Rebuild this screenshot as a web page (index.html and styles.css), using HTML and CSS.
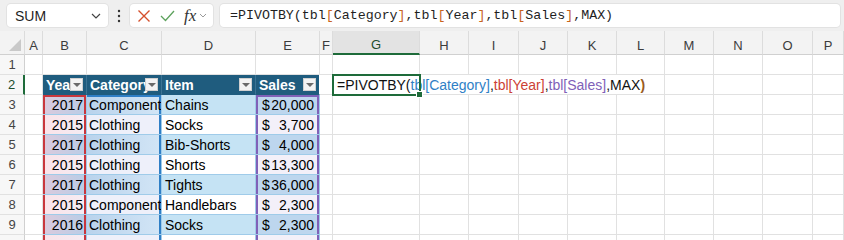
FILE: index.html
```html
<!DOCTYPE html>
<html lang="en">
<head>
    <meta charset="UTF-8">
    <title>PIVOTBY sheet</title>
    <link rel="stylesheet" href="styles.css">
</head>
<body>

    <!-- Formula bar -->
    <div class="topbar">
        <div class="namebox">
            <span>SUM</span>
            <svg width="10" height="6" viewBox="0 0 10 6"><polyline points="1,1 5,5 9,1" fill="none" stroke="#444" stroke-width="1.2"/></svg>
        </div>
        <div class="kebab">
            <svg width="4" height="14" viewBox="0 0 4 14"><circle cx="2" cy="2" r="1.2" fill="#333"/><circle cx="2" cy="7" r="1.2" fill="#333"/><circle cx="2" cy="12" r="1.2" fill="#333"/></svg>
        </div>
        <div class="fnbox">
            <svg class="cancel" width="14" height="14" viewBox="0 0 14 14"><path d="M1.5 1.5 L12.5 12.5 M12.5 1.5 L1.5 12.5" stroke="#d5502c" stroke-width="1.4" fill="none"/></svg>
            <svg class="enter" width="15" height="12" viewBox="0 0 15 12"><polyline points="1,6 5.5,10.5 14,1" fill="none" stroke="#5da25d" stroke-width="1.3"/></svg>
            <span class="fx">fx</span>
            <svg width="8" height="5" viewBox="0 0 8 5"><polyline points="1,1 4,4 7,1" fill="none" stroke="#9a9a9a" stroke-width="1"/></svg>
        </div>
        <div class="formula">=PIVOTBY(tbl<b>[</b>Category<b>]</b>,tbl<b>[</b>Year<b>]</b>,tbl<b>[</b>Sales<b>]</b>,MAX)</div>
    </div>

    <!-- Grid -->
    <table class="sheet">
        <colgroup>
            <col style="width:25px"><col style="width:18px"><col style="width:44px"><col style="width:75px">
            <col style="width:94px"><col style="width:64px"><col style="width:13px"><col style="width:87px">
            <col style="width:49px"><col style="width:50px"><col style="width:49px"><col style="width:49px">
            <col style="width:48px"><col style="width:49px"><col style="width:49px"><col style="width:50px">
            <col style="width:31px">
        </colgroup>
        <thead>
            <tr>
                <th class="corner"><span class="tri"></span></th>
                <th>A</th><th>B</th><th>C</th><th>D</th><th>E</th><th>F</th>
                <th class="sel">G</th><th>H</th><th>I</th><th>J</th><th>K</th><th>L</th>
                <th>M</th><th>N</th><th>O</th><th>P</th>
            </tr>
        </thead>
        <tbody>
            <tr>
                <td class="rh">1</td>
                <td></td><td></td><td></td><td></td><td></td><td></td><td></td>
                <td></td><td></td><td></td><td></td><td></td><td></td><td></td><td></td><td></td>
            </tr>
            <tr>
                <td class="rh cur">2</td>
                <td></td>
                <td class="hd"><div class="hd-in"><span>Year</span><i class="filter"></i></div></td>
                <td class="hd"><div class="hd-in"><span>Category</span><i class="filter"></i></div></td>
                <td class="hd"><div class="hd-in"><span>Item</span><i class="filter"></i></div></td>
                <td class="hd last"><div class="hd-in"><span>Sales</span><i class="filter"></i></div></td>
                <td></td>
                <td class="editing" colspan="6">
                    <span class="edit">=PIVOTBY(<span class="r-cat">tbl[Category]</span>,<span class="r-yr">tbl[Year]</span>,<span class="r-sales">tbl[Sales]</span>,MAX<span class="paren">)</span></span>
                    <div class="active"><i class="handle"></i></div>
                </td>
                <td></td><td></td><td></td><td></td>
            </tr>
            <tr class="band first">
                <td class="rh">3</td><td></td>
                <td class="yr">2017</td><td class="cat">Component</td><td class="item">Chains</td>
                <td class="amt"><div class="money"><span>$</span><span>20,000</span></div></td>
                <td></td><td></td><td></td><td></td><td></td><td></td><td></td><td></td><td></td><td></td><td></td>
            </tr>
            <tr>
                <td class="rh">4</td><td></td>
                <td class="yr">2015</td><td class="cat">Clothing</td><td class="item">Socks</td>
                <td class="amt"><div class="money"><span>$</span><span>3,700</span></div></td>
                <td></td><td></td><td></td><td></td><td></td><td></td><td></td><td></td><td></td><td></td><td></td>
            </tr>
            <tr class="band">
                <td class="rh">5</td><td></td>
                <td class="yr">2017</td><td class="cat">Clothing</td><td class="item">Bib-Shorts</td>
                <td class="amt"><div class="money"><span>$</span><span>4,000</span></div></td>
                <td></td><td></td><td></td><td></td><td></td><td></td><td></td><td></td><td></td><td></td><td></td>
            </tr>
            <tr>
                <td class="rh">6</td><td></td>
                <td class="yr">2015</td><td class="cat">Clothing</td><td class="item">Shorts</td>
                <td class="amt"><div class="money"><span>$</span><span>13,300</span></div></td>
                <td></td><td></td><td></td><td></td><td></td><td></td><td></td><td></td><td></td><td></td><td></td>
            </tr>
            <tr class="band">
                <td class="rh">7</td><td></td>
                <td class="yr">2017</td><td class="cat">Clothing</td><td class="item">Tights</td>
                <td class="amt"><div class="money"><span>$</span><span>36,000</span></div></td>
                <td></td><td></td><td></td><td></td><td></td><td></td><td></td><td></td><td></td><td></td><td></td>
            </tr>
            <tr>
                <td class="rh">8</td><td></td>
                <td class="yr">2015</td><td class="cat">Component</td><td class="item">Handlebars</td>
                <td class="amt"><div class="money"><span>$</span><span>2,300</span></div></td>
                <td></td><td></td><td></td><td></td><td></td><td></td><td></td><td></td><td></td><td></td><td></td>
            </tr>
            <tr class="band">
                <td class="rh">9</td><td></td>
                <td class="yr">2016</td><td class="cat">Clothing</td><td class="item">Socks</td>
                <td class="amt"><div class="money"><span>$</span><span>2,300</span></div></td>
                <td></td><td></td><td></td><td></td><td></td><td></td><td></td><td></td><td></td><td></td><td></td>
            </tr>
            <tr>
                <td class="rh"></td><td></td>
                <td class="yr"></td><td class="cat"></td><td class="item"></td><td class="amt"></td>
                <td></td><td></td><td></td><td></td><td></td><td></td><td></td><td></td><td></td><td></td><td></td>
            </tr>
        </tbody>
    </table>

</body>
</html>
```

FILE: styles.css
```css
body {
    margin: 0;
    width: 844px;
    height: 240px;
    overflow: hidden;
    background: #fff;
    font-family: "Liberation Sans", Arial, sans-serif;
}

/* Formula bar */
.topbar {
    display: flex;
    align-items: center;
    height: 31px;
    padding: 0 4px 0 7px;
    background: #efefef;
    box-sizing: border-box;
}

.namebox {
    display: flex;
    align-items: center;
    justify-content: space-between;
    width: 101px;
    height: 23px;
    padding: 0 7px 0 8px;
    background: #fff;
    border-radius: 4px;
    box-shadow: 0 0 0 1px #e2e2e2;
    box-sizing: border-box;
    font-size: 14px;
    color: #1f1f1f;
}

.kebab {
    display: flex;
    justify-content: center;
    width: 22px;
}

.fnbox {
    display: flex;
    align-items: center;
    width: 83px;
    height: 23px;
    padding: 0 4px 0 7px;
    margin-right: 7px;
    background: #fff;
    border-radius: 4px;
    box-shadow: 0 0 0 1px #e2e2e2;
    box-sizing: border-box;
}

.fnbox .cancel {
    margin-right: 9px;
}

.fnbox .enter {
    margin-right: 9px;
}

.fx {
    font-family: "Liberation Serif", serif;
    font-style: italic;
    font-size: 17px;
    color: #333;
    margin-right: 3px;
    line-height: 1;
}

.formula {
    flex: 1;
    height: 23px;
    line-height: 23px;
    padding-left: 10px;
    background: #fff;
    border-radius: 4px;
    box-shadow: 0 0 0 1px #e2e2e2;
    font-family: "Liberation Mono", monospace;
    font-size: 13.3px;
    color: #1f1f1f;
}

.formula b {
    font-weight: normal;
    color: #c8641e;
}

/* Sheet grid */
.sheet {
    border-collapse: separate;
    border-spacing: 0;
    table-layout: fixed;
    width: 844px;
}

.sheet th,
.sheet td {
    padding: 0;
    border-right: 1px solid #e1e1e1;
    border-bottom: 1px solid #e1e1e1;
    white-space: nowrap;
    overflow: hidden;
    font-size: 14px;
    box-sizing: border-box;
}

.sheet thead tr {
    height: 24px;
}

.sheet tbody tr {
    height: 20px;
}

.sheet th {
    background: #f3f3f3;
    font-weight: normal;
    font-size: 13px;
    color: #3c3c3c;
    padding-top: 5px;
    border-bottom-color: #d0d0d0;
    border-right-color: #dcdcdc;
}

.sheet th.sel {
    background: #e3e3e3;
    color: #1d4d2e;
    border-bottom: 2px solid #1e6b3a;
}

.corner {
    position: relative;
}

.corner .tri {
    position: absolute;
    right: 3px;
    bottom: 3px;
    width: 0;
    height: 0;
    border-left: 12px solid transparent;
    border-bottom: 12px solid #c9c9c9;
}

.sheet td.rh {
    background: #f7f7f7;
    text-align: center;
    font-size: 13px;
    color: #444;
    border-right-color: #d0d0d0;
}

.sheet td.rh.cur {
    border-right: 2px solid #1e6b3a;
    color: #1d4d2e;
}

/* Table header row */
.sheet td.hd {
    background: #1f5c7e;
    color: #fff;
    font-weight: bold;
    border-right-color: #3b7394;
    border-bottom-color: #1f5c7e;
}

.sheet td.hd.last {
    border-right-color: #fff;
}

.hd-in {
    display: flex;
    align-items: center;
    padding-left: 3px;
}

.hd-in span {
    flex: 1;
    min-width: 0;
}

.filter {
    flex: none;
    position: relative;
    width: 13px;
    height: 13px;
    margin: 0 3px 0 1px;
    background: #f3f3f3;
    box-sizing: border-box;
    border: 1px solid #d0d0d0;
}

.filter::after {
    content: "";
    position: absolute;
    left: 2px;
    top: 4px;
    border-left: 4px solid transparent;
    border-right: 4px solid transparent;
    border-top: 4px solid #6a6a6a;
}

/* Table body */
.sheet td.yr,
.sheet td.cat,
.sheet td.item,
.sheet td.amt {
    border-bottom-color: #9fcbe9;
    border-right-color: #9fcbe9;
}

.yr {
    text-align: right;
    padding-right: 3px !important;
    background: linear-gradient(90deg, #fbe3e9, #f4ecf3);
    box-shadow: inset 2px 0 #c9373d, inset -2px 0 #c9373d;
}

.cat {
    padding-left: 2px !important;
    background: #eef0fa;
    box-shadow: inset -2px 0 #2f7fc6;
}

.item {
    padding-left: 3px !important;
    background: #fff;
}

.amt {
    background: #f3f0f9;
    box-shadow: inset 2px 0 #8061b8, inset -2px 0 #8061b8;
}

.band .yr { background: linear-gradient(90deg, #dccadd, #b8cde6); }
.band .cat { background: linear-gradient(90deg, #b9d3ec, #d2e5f6); }
.band .item { background: #c5e3f4; }
.band .amt { background: #bdd6ee; }

.first .yr { box-shadow: inset 2px 0 #c9373d, inset -2px 0 #c9373d, inset 0 2px #c9373d; }
.first .cat { box-shadow: inset -2px 0 #2f7fc6, inset 0 2px #2f7fc6; }
.first .amt { box-shadow: inset 2px 0 #8061b8, inset -2px 0 #8061b8, inset 0 2px #8061b8; }

.money {
    display: flex;
    justify-content: space-between;
    padding: 0 5px 0 6px;
}

/* Cell being edited */
.sheet td.editing {
    position: relative;
    overflow: visible;
    padding-left: 4px;
    color: #111;
}

.r-cat { color: #2f7fc6; }
.r-yr { color: #cc3f35; }
.r-sales { color: #8061b8; }
.paren { color: #9a5a1c; font-weight: bold; }

.active {
    position: absolute;
    left: -1px;
    top: -1px;
    width: 89px;
    height: 22px;
    border: 2px solid #1e6b3a;
    box-sizing: border-box;
}

.handle {
    position: absolute;
    right: -4px;
    bottom: -4px;
    width: 5px;
    height: 5px;
    background: #1e6b3a;
    border: 1px solid #fff;
}
```
